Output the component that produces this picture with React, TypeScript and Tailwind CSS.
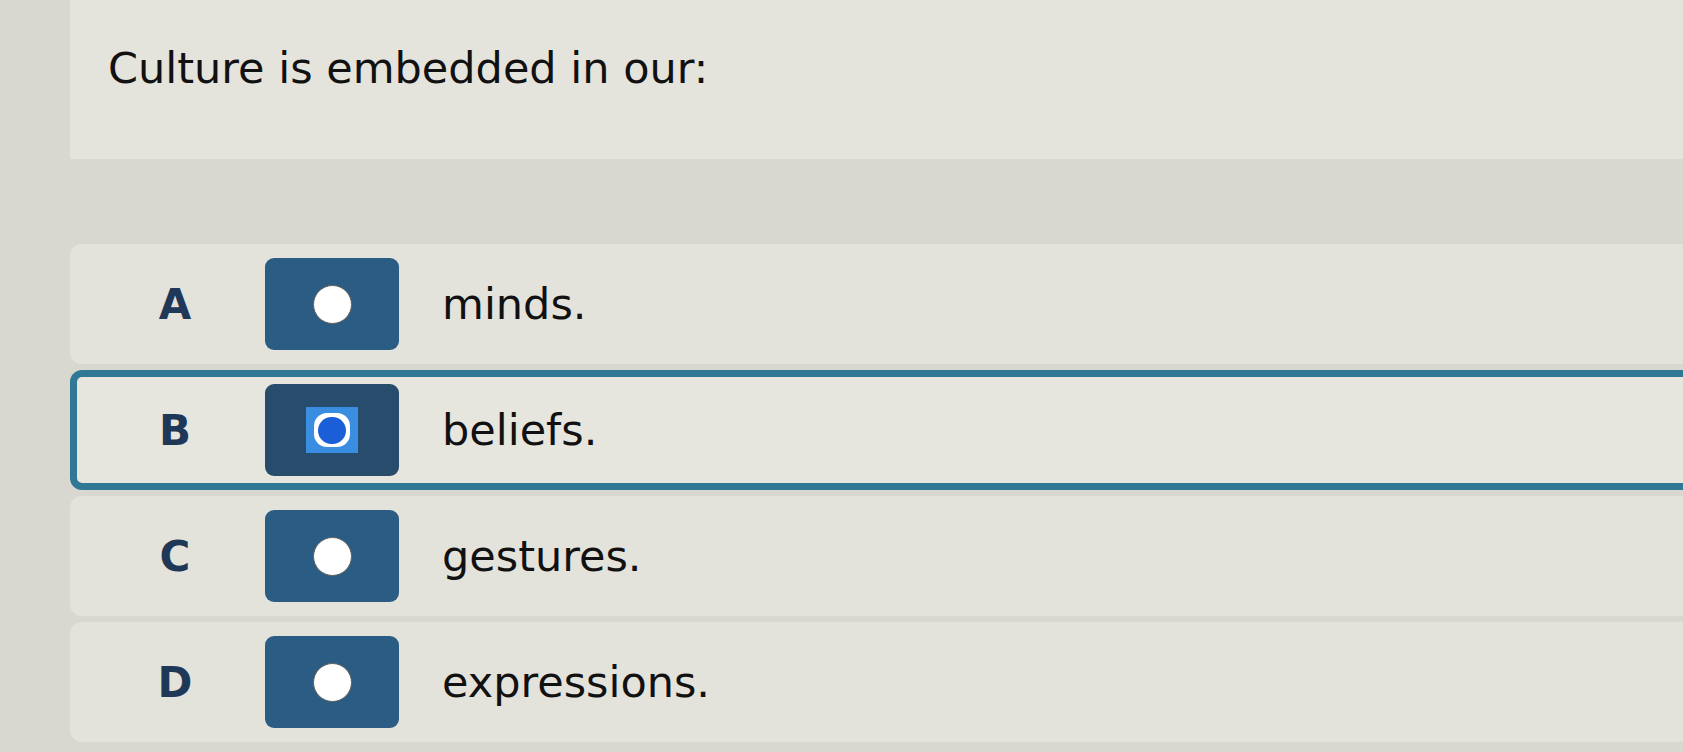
import React, { useState } from "react";

type Option = { key: string; label: string };

const options: Option[] = [
  { key: "A", label: "minds." },
  { key: "B", label: "beliefs." },
  { key: "C", label: "gestures." },
  { key: "D", label: "expressions." },
];

function RadioButton({ selected }: { selected: boolean }) {
  return (
    <div
      className={`flex h-[92px] w-[134px] shrink-0 items-center justify-center rounded-[9px] ${
        selected ? "bg-[#284c6b]" : "bg-[#2b5c84]"
      }`}
    >
      {selected ? (
        <div className="flex h-[46px] w-[52px] items-center justify-center bg-[#3a8ee2]">
          <div className="flex h-[34px] w-[36px] items-center justify-center rounded-[13px] bg-white">
            <div className="h-[27px] w-[28px] rounded-full bg-[#1a5fd8]" />
          </div>
        </div>
      ) : (
        <div className="h-[39px] w-[39px] rounded-full border border-[#5f5f5c] bg-white" />
      )}
    </div>
  );
}

export default function App() {
  const [answer, setAnswer] = useState("B");

  return (
    <div
      className="flex h-[752px] w-[1683px] overflow-hidden bg-[#d8d7d0]"
      style={{ fontFamily: '"DejaVu Sans", Verdana, sans-serif' }}
    >
      <div className="ml-[70px] flex flex-1 flex-col">
        {/* question */}
        <div className="h-[159px] bg-[#e4e3dc] pl-[38px] pt-[43px]">
          <h1 className="text-[43px] leading-[50px] text-[#111111]">
            Culture is embedded in our:
          </h1>
        </div>

        {/* answers */}
        <div className="mt-[85px] -mr-6 flex flex-col gap-[6px]">
          {options.map((opt) => {
            const selected = answer === opt.key;
            return (
              <div
                key={opt.key}
                onClick={() => setAnswer(opt.key)}
                className={`flex h-[120px] cursor-pointer items-center rounded-[12px] border-[7px] ${
                  selected
                    ? "border-[#2f7896] bg-[#e6e5de]"
                    : "border-transparent bg-[#e3e2db]"
                }`}
              >
                <div className="ml-[63px] w-[70px] text-center text-[42px] font-bold text-[#1f3858]">
                  {opt.key}
                </div>
                <div className="ml-[55px]">
                  <RadioButton selected={selected} />
                </div>
                <div className="ml-[43px] text-[43px] text-[#111111]">{opt.label}</div>
              </div>
            );
          })}
        </div>
      </div>
    </div>
  );
}
